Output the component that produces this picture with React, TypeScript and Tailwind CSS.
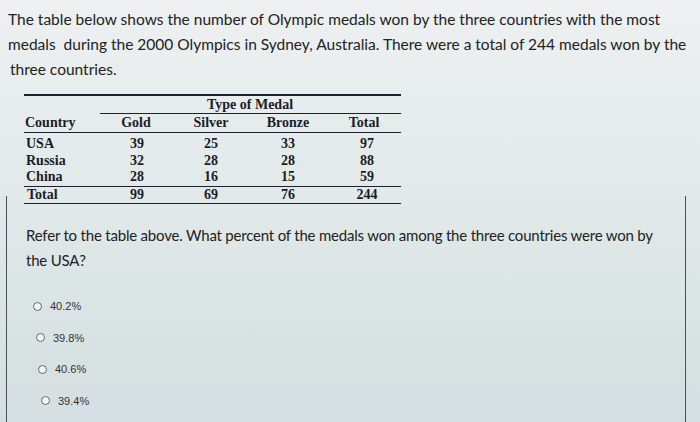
const rows = [
  { country: 'USA', gold: 39, silver: 25, bronze: 33, total: 97 },
  { country: 'Russia', gold: 32, silver: 28, bronze: 28, total: 88 },
  { country: 'China', gold: 28, silver: 16, bronze: 15, total: 59 },
];

const options = ['40.2%', '39.8%', '40.6%', '39.4%'];
const shifts = ['pl-[26px]', 'pl-[29px]', 'pl-[31px]', 'pl-[34px]'];

const cols = 'grid grid-cols-[75px_74px_76px_78px_74px] items-center';

function MedalTable() {
  return (
    <div className="ml-[24px] w-[377px] font-['Liberation_Serif',serif] font-bold text-[14px] leading-none text-[#1a1d28]">
      <div className="border-t-2 border-[#1c2030]" />
      <div className={`${cols} h-[17px]`}>
        <div />
        <div className="col-span-4 text-center">Type of Medal</div>
      </div>
      <div className="ml-[76px] border-t-[1.5px] border-[#1c2030]" />
      <div className={`${cols} h-[18px]`}>
        <div className="pl-[1px]">Country</div>
        <div className="text-center">Gold</div>
        <div className="text-center">Silver</div>
        <div className="text-center">Bronze</div>
        <div className="text-center">Total</div>
      </div>
      <div className="border-t-[1.5px] border-[#1c2030]" />
      <div className="pt-[3px]">
        {rows.map((r) => (
          <div key={r.country} className={`${cols} h-[16.5px]`}>
            <div className="pl-[2px]">{r.country}</div>
            <div className="text-center pl-[2px]">{r.gold}</div>
            <div className="text-center">{r.silver}</div>
            <div className="text-center">{r.bronze}</div>
            <div className="text-center pl-[6px]">{r.total}</div>
          </div>
        ))}
      </div>
      <div className="border-t-[1.5px] border-[#1c2030]" />
      <div className={`${cols} h-[16px]`}>
        <div className="pl-[3px]">Total</div>
        <div className="text-center pl-[2px]">99</div>
        <div className="text-center">69</div>
        <div className="text-center">76</div>
        <div className="text-center pl-[6px]">244</div>
      </div>
      <div className="border-t-[1.5px] border-[#1c2030]" />
    </div>
  );
}

export default function App() {
  return (
    <div className="w-[700px] h-[422px] overflow-hidden bg-gradient-to-b from-[#eef0f1] via-[#e0e9e8] to-[#d5dee0] font-['Lato',sans-serif] text-[#222]">
      <div className="pt-[7px] pl-[8px] pr-[4px] text-[15.5px] leading-[25px]">
        <p className="whitespace-nowrap">The table below shows the number of Olympic medals won by the three countries with the most</p>
        <p className="whitespace-nowrap">medals&nbsp; during the 2000 Olympics in Sydney, Australia. There were a total of 244 medals won by the</p>
        <p className="pl-[2px]">three countries.</p>
      </div>

      <div className="mt-[12px]">
        <MedalTable />
      </div>

      <div className="mt-[-8px] ml-[6px] mr-[14px] h-[240px] border-l border-r border-[#4a5058] pt-[27px]">
        <div className="pl-[19px] text-[15px] leading-[25px] tracking-[-0.2px]">
          <p>Refer to the table above. What percent of the medals won among the three countries were won by</p>
          <p>the USA?</p>
        </div>
        <div className="mt-[27px] flex flex-col gap-[18px] font-['Liberation_Sans',sans-serif] text-[11px] text-[#333]">
          {options.map((o, i) => (
            <label key={o} className={`flex items-center gap-[8px] h-[13.5px] ${shifts[i]}`}>
              <span className="w-[9px] h-[9px] rounded-full border border-[#666] bg-[#f3f5f5]" />
              <span>{o}</span>
            </label>
          ))}
        </div>
      </div>
    </div>
  );
}
